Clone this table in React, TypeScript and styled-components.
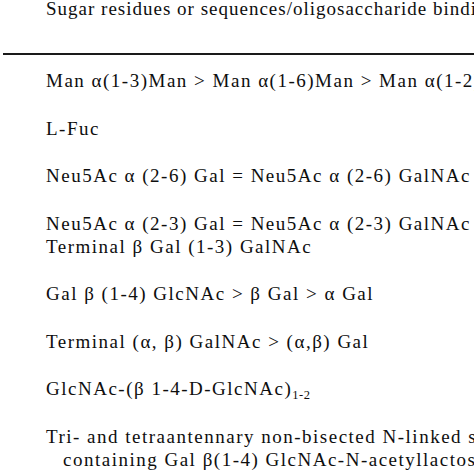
import styled, { createGlobalStyle } from 'styled-components';

const GlobalStyle = createGlobalStyle`
  html, body {
    margin: 0;
    padding: 0;
    background: #ffffff;
  }
  body {
    width: 474px;
    height: 474px;
    overflow: hidden;
  }
`;

const Page = styled.div`
  width: 474px;
  height: 474px;
  overflow: hidden;
  background: #ffffff;
  color: #0e0e0e;
  font-family: 'Liberation Serif', 'Times New Roman', serif;
`;

const HeaderRow = styled.div`
  margin-left: 3px;
  padding: 0 0 35px 43px;
  border-bottom: 2px solid #1a1a1a;
  font-size: 19px;
  line-height: 18px;
  letter-spacing: 1px;
  white-space: nowrap;
`;

const Body = styled.div`
  display: grid;
  row-gap: 24.5px;
  padding: 14px 0 0 46px;
`;

const Entry = styled.div`
  font-size: 19px;
  line-height: 23px;
  letter-spacing: 1.5px;
  white-space: nowrap;
`;

const Continuation = styled.div`
  padding-left: 17px;
`;

const Sub = styled.sub`
  font-size: 12.5px;
  line-height: 0;
  letter-spacing: 0.5px;
  vertical-align: -4px;
`;

const rows: string[] = [
  'Man α(1-3)Man > Man α(1-6)Man > Man α(1-2)Man',
  'L-Fuc',
  'Neu5Ac α (2-6) Gal = Neu5Ac α (2-6) GalNAc',
];

const rowsAfter: string[] = [
  'Gal β (1-4) GlcNAc > β Gal > α Gal',
  'Terminal (α, β) GalNAc > (α,β) Gal',
];

export default function App() {
  return (
    <Page>
      <GlobalStyle />
      <HeaderRow>Sugar residues or sequences/oligosaccharide binding specificity</HeaderRow>
      <Body>
        {rows.map((r) => (
          <Entry key={r}>{r}</Entry>
        ))}
        <Entry>
          <div>Neu5Ac α (2-3) Gal = Neu5Ac α (2-3) GalNAc</div>
          <div>Terminal β Gal (1-3) GalNAc</div>
        </Entry>
        {rowsAfter.map((r) => (
          <Entry key={r}>{r}</Entry>
        ))}
        <Entry>
          GlcNAc-(β 1-4-D-GlcNAc)<Sub>1-2</Sub>
        </Entry>
        <Entry>
          <div>Tri- and tetraantennary non-bisected N-linked structures</div>
          <Continuation>containing Gal β(1-4) GlcNAc-N-acetyllactosamine</Continuation>
        </Entry>
      </Body>
    </Page>
  );
}
